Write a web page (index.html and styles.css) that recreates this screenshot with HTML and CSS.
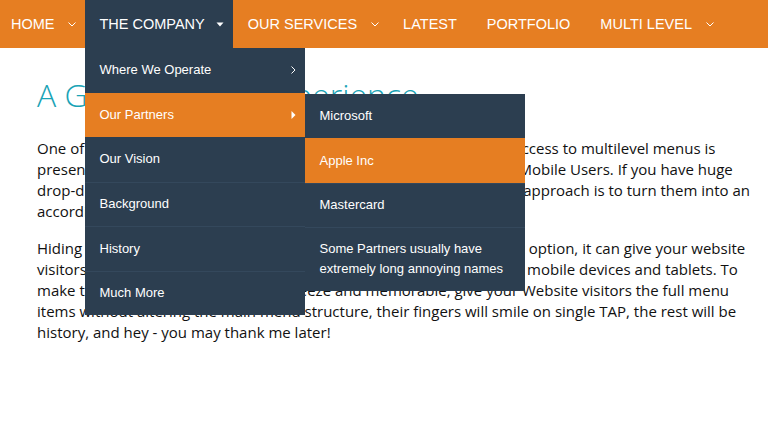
FILE: index.html
```html
<!DOCTYPE html>
<html>
<head>
<meta charset="utf-8">
<link rel="stylesheet" href="styles.css">
</head>
<body>
<nav class="nav">
  <ul class="menu">
    <li class="item first has"><span>HOME</span><svg class="arr" width="8" height="5" viewBox="0 0 8 5"><polyline points="0.5,0.5 4,4 7.5,0.5" fill="none" stroke="#fff" stroke-width="1"/></svg></li>
    <li class="item has open"><span>THE COMPANY</span><svg class="arr caret" width="8" height="5" viewBox="0 0 8 5"><polygon points="0.5,0.5 7.5,0.5 4,4.5" fill="#fff"/></svg>
      <ul class="drop">
        <li class="sub"><span>Where We Operate</span><svg class="rarr" width="5" height="8" viewBox="0 0 5 8"><polyline points="0.5,0.5 4,4 0.5,7.5" fill="none" stroke="#fff" stroke-width="1"/></svg></li>
        <li class="sub hot"><span>Our Partners</span><svg class="rarr" width="5" height="8" viewBox="0 0 5 8"><polygon points="0.5,0 4.5,4 0.5,8" fill="#fff"/></svg>
          <ul class="drop2">
            <li class="sub nosep">Microsoft</li>
            <li class="sub hot">Apple Inc</li>
            <li class="sub">Mastercard</li>
            <li class="sub two">Some Partners usually have extremely long annoying names</li>
          </ul>
        </li>
        <li class="sub nosep">Our Vision</li>
        <li class="sub">Background</li>
        <li class="sub">History</li>
        <li class="sub">Much More</li>
      </ul>
    </li>
    <li class="item has"><span>OUR SERVICES</span><svg class="arr" width="8" height="5" viewBox="0 0 8 5"><polyline points="0.5,0.5 4,4 7.5,0.5" fill="none" stroke="#fff" stroke-width="1"/></svg></li>
    <li class="item"><span>LATEST</span></li>
    <li class="item"><span>PORTFOLIO</span></li>
    <li class="item has"><span>MULTI LEVEL</span><svg class="arr" width="8" height="5" viewBox="0 0 8 5"><polyline points="0.5,0.5 4,4 7.5,0.5" fill="none" stroke="#fff" stroke-width="1"/></svg></li>
  </ul>
</nav>
<main class="content">
  <h1 class="title">A Great Mobile Experience</h1>
  <p class="para">One of the very best solutions to give all your website visitors easier access to multilevel menus is<br>presented here, especially designed and carefully optimized for your Mobile Users. If you have huge<br>drop-down menus with lots of items and sub-items, perhaps the best approach is to turn them into an<br>accordion.</p>
  <p class="para">Hiding the main navigation menu is definitely not always the very best option, it can give your website<br>visitors a very hard and frustrating time while browsing the web using mobile devices and tablets. To<br>make the website navigation a real breeze and memorable, give your Website visitors the full menu<br>items without altering the main menu structure, their fingers will smile on single TAP, the rest will be<br>history, and hey - you may thank me later!</p>
</main>
</body>
</html>
```
FILE: styles.css
```css
* { box-sizing: border-box; }
html, body { margin: 0; padding: 0; background: #fff; }
body { width: 768px; height: 423px; overflow: hidden; }

.nav { background: #e67e22; height: 48px; position: relative; z-index: 5; }
.menu { list-style: none; margin: 0; padding: 0; display: flex; height: 48px; }
.item {
  position: relative;
  display: flex; align-items: center;
  padding: 0 15px;
  height: 48px;
  color: #fff;
  font-family: "Liberation Sans", Arial, sans-serif;
  font-size: 14.5px;
}
.item.has { padding-right: 9px; }
.item.first { padding-left: 11px; }
.item.first .arr { margin-left: 13px; }
.item.open { background: #2c3e50; }
.arr { margin-left: 14px; display: block; }
.arr.caret { margin-left: 11px; margin-right: 0; }

.drop, .drop2 {
  list-style: none; margin: 0; padding: 0;
  position: absolute;
  width: 220px;
  background: #2c3e50;
}
.drop { top: 48px; left: 0; }
.drop2 { top: 0; left: 220px; }

.sub {
  position: relative;
  display: flex; align-items: center; justify-content: space-between;
  min-height: 44.5px;
  padding: 0 9px 0 15px;
  border-top: 1px solid #34485c;
  color: #fff;
  font-family: "Liberation Sans", Arial, sans-serif;
  font-size: 13px;
  line-height: 20px;
}
.drop > .sub:first-child, .sub.nosep { border-top: 0; }
.sub.hot { background: #e67e22; border-top-color: #e67e22; }
.sub.two { padding: 11px 15px 12px 15px; min-height: 64px; display: block; }
.rarr { display: block; }

.content { padding: 0 37px; font-family: "Open Sans", "Noto Sans", sans-serif; }
.title {
  margin: 27px 0 0;
  font-size: 32px;
  font-weight: 300;
  color: #1aa3b6;
  line-height: 40px;
}
.para {
  margin: 16px 0 0;
  font-size: 15px;
  line-height: 21px;
  color: #111;
  white-space: nowrap;
}
.title + .para { margin-top: 23px; }
```
